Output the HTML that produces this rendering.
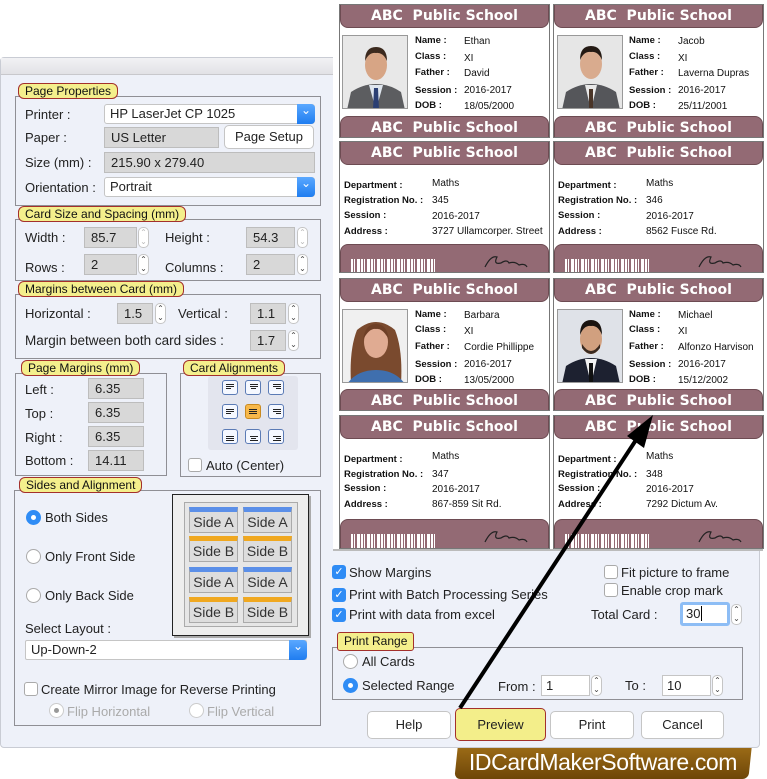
<!DOCTYPE html>
<html><head><meta charset="utf-8">
<style>
*{box-sizing:border-box;margin:0;padding:0}
body{width:767px;height:779px;position:relative;overflow:hidden;background:#fff;font-family:"Liberation Sans",Arial,sans-serif;font-size:13px;color:#222}
.a{position:absolute}
.dlg{left:0;top:57px;width:760px;height:691px;background:#eef1f9;border:1px solid #c9ccd4;border-radius:4px}
.strip{left:1px;top:58px;width:758px;height:17px;background:linear-gradient(#f2f2f4,#e2e2e6);border-bottom:1px solid #c8c8cc}
.box{border:1px solid #8f8f95}
.lbl{background:#f4ef8c;border:1px solid #a3302c;border-radius:6px;font-size:12px;line-height:14px;padding:0 6px;white-space:nowrap;color:#111}
.fld{background:#d8d8d8;border:1px solid #bdbdbd;font-size:13px;padding-left:6px;line-height:19px}
.sel{background:#fff;border:1px solid #c5c5c5;font-size:13px;padding-left:5px;line-height:18px;border-radius:3px}
.sel:after{content:"⌄";position:absolute;right:-1px;top:-1px;width:18px;height:20px;background:linear-gradient(#5aa8ff,#1f7df0);border-radius:0 4px 4px 0;color:#fff;text-align:center;font-size:12px;line-height:12px}
.spin{width:11px;height:21px;border:1px solid #c5c5c5;border-radius:5px;background:#fff;font-size:8px;line-height:9px;text-align:center;color:#444}
.btn{background:#fff;border:1px solid #c5c5c5;border-radius:5px;text-align:center;font-size:13px;line-height:26px}
.rad{width:15px;height:15px;border-radius:50%;border:1px solid #aaa;background:#fff}
.rad.on{background:#2f8cf5;border-color:#2f8cf5}
.rad.on:after{content:"";position:absolute;left:4px;top:4px;width:5px;height:5px;border-radius:50%;background:#fff}
.chk{width:14px;height:14px;border:1px solid #aaa;border-radius:3px;background:#fff}
.chk.on{background:#2f8cf5;border-color:#2f8cf5;color:#fff;font-size:11px;line-height:13px;text-align:center}
.card{width:211px;border:1px solid #777;background:#fff;overflow:hidden}
.hd{position:absolute;left:0;width:209px;height:24px;background:#936a74;border:1px solid #6d4b52;color:#fff;font:bold 14px "DejaVu Sans",sans-serif;text-align:center;line-height:23px;white-space:pre}
.top{top:-1px;border-radius:0 0 8px 8px}
.bot{border-radius:8px 8px 0 0}
.k{position:absolute;font:bold 9.5px "Liberation Sans",Arial,sans-serif;color:#111;white-space:nowrap}
.v{position:absolute;font-size:10px;color:#111;white-space:nowrap}
.ph{position:absolute;left:2px;top:30px;width:66px;height:74px;border:1px solid #999;background:#eaeaea;overflow:hidden}
.bc{position:absolute;left:10px;top:14px;width:86px;height:15px;background:repeating-linear-gradient(90deg,#fff 0 2px,transparent 2px 3px,#fff 3px 4px,transparent 4px 6px,#fff 6px 9px,transparent 9px 10px)}
.ai{position:absolute;width:16px;height:15px;border:1px solid #5b7bb5;border-radius:3px;background:#f5f8ff}
.ai i{position:absolute;left:3px;width:8px;height:1px;background:#222}
.sb{position:absolute;width:49px;height:26px;border:1px solid #aaa;background:#ddd;font-size:14px;text-align:center;line-height:20px;color:#333}
.sb.A{border-top:5px solid #5b8fe8}
.sb.B{border-top:5px solid #f0a820}
</style></head><body>

<div class="a dlg"></div>
<div class="a strip"></div>

<div class="a box" style="left:15px;top:96px;width:306px;height:110px"></div>
<div class="a lbl" style="left:18px;top:83px">Page Properties</div>
<div class="a" style="left:25px;top:107px">Printer :</div>
<div class="a sel" style="left:104px;top:104px;width:211px;height:20px">HP LaserJet CP 1025</div>
<div class="a" style="left:25px;top:130px">Paper :</div>
<div class="a fld" style="left:104px;top:127px;width:115px;height:21px">US Letter</div>
<div class="a btn" style="left:224px;top:125px;width:90px;height:24px;line-height:22px">Page Setup</div>
<div class="a" style="left:25px;top:155px">Size (mm) :</div>
<div class="a fld" style="left:104px;top:152px;width:211px;height:21px">215.90 x 279.40</div>
<div class="a" style="left:25px;top:180px">Orientation :</div>
<div class="a sel" style="left:104px;top:177px;width:211px;height:20px">Portrait</div>

<div class="a box" style="left:15px;top:219px;width:306px;height:62px"></div>
<div class="a lbl" style="left:18px;top:206px">Card Size and Spacing (mm)</div>
<div class="a" style="left:25px;top:230px">Width :</div>
<div class="a fld" style="left:84px;top:227px;width:53px;height:21px">85.7</div>
<div class="a spin" style="left:138px;top:227px;color:#bbb">⌃<br>⌄</div>
<div class="a" style="left:165px;top:230px">Height :</div>
<div class="a fld" style="left:246px;top:227px;width:49px;height:21px">54.3</div>
<div class="a spin" style="left:297px;top:227px;color:#bbb">⌃<br>⌄</div>
<div class="a" style="left:25px;top:260px">Rows :</div>
<div class="a fld" style="left:84px;top:254px;width:53px;height:21px">2</div>
<div class="a spin" style="left:138px;top:254px">⌃<br>⌄</div>
<div class="a" style="left:165px;top:260px">Columns :</div>
<div class="a fld" style="left:246px;top:254px;width:49px;height:21px">2</div>
<div class="a spin" style="left:297px;top:254px">⌃<br>⌄</div>

<div class="a box" style="left:15px;top:294px;width:306px;height:65px"></div>
<div class="a lbl" style="left:18px;top:281px">Margins between Card (mm)</div>
<div class="a" style="left:25px;top:306px">Horizontal :</div>
<div class="a fld" style="left:117px;top:303px;width:36px;height:21px">1.5</div>
<div class="a spin" style="left:155px;top:303px">⌃<br>⌄</div>
<div class="a" style="left:178px;top:306px">Vertical :</div>
<div class="a fld" style="left:250px;top:303px;width:36px;height:21px">1.1</div>
<div class="a spin" style="left:288px;top:303px">⌃<br>⌄</div>
<div class="a" style="left:25px;top:333px;font-size:13.5px">Margin between both card sides :</div>
<div class="a fld" style="left:250px;top:330px;width:36px;height:21px">1.7</div>
<div class="a spin" style="left:288px;top:330px">⌃<br>⌄</div>

<div class="a box" style="left:15px;top:373px;width:152px;height:103px"></div>
<div class="a lbl" style="left:21px;top:360px">Page Margins (mm)</div>
<div class="a" style="left:25px;top:382px">Left :</div>
<div class="a fld" style="left:88px;top:378px;width:56px;height:21px">6.35</div>
<div class="a" style="left:25px;top:406px">Top :</div>
<div class="a fld" style="left:88px;top:402px;width:56px;height:21px">6.35</div>
<div class="a" style="left:25px;top:430px">Right :</div>
<div class="a fld" style="left:88px;top:426px;width:56px;height:21px">6.35</div>
<div class="a" style="left:25px;top:453px">Bottom :</div>
<div class="a fld" style="left:88px;top:450px;width:56px;height:21px">14.11</div>

<div class="a box" style="left:180px;top:373px;width:141px;height:104px"></div>
<div class="a lbl" style="left:183px;top:360px">Card Alignments</div>
<div class="a" style="left:208px;top:376px;width:90px;height:74px;background:#e3e5ee;border-radius:3px"></div>
<div class="ai" style="left:222px;top:380px"><i style="top:3px"></i><i style="top:5px"></i><i style="top:7px;width:5px"></i></div>
<div class="ai" style="left:245px;top:380px"><i style="top:3px;left:4px"></i><i style="top:5px;left:4px"></i><i style="top:7px;left:5px;width:5px"></i></div>
<div class="ai" style="left:268px;top:380px"><i style="top:3px;left:4px"></i><i style="top:5px;left:4px"></i><i style="top:7px;left:7px;width:5px"></i></div>
<div class="ai" style="left:222px;top:404px"><i style="top:4px"></i><i style="top:6px"></i><i style="top:8px;width:5px"></i></div>
<div class="ai" style="left:245px;top:404px;background:#f7b84a;border-color:#c98a20"><i style="top:4px;left:3px"></i><i style="top:6px;left:3px"></i><i style="top:8px;left:3px"></i></div>
<div class="ai" style="left:268px;top:404px"><i style="top:4px;left:4px"></i><i style="top:6px;left:4px"></i><i style="top:8px;left:7px;width:5px"></i></div>
<div class="ai" style="left:222px;top:429px"><i style="top:6px"></i><i style="top:8px"></i><i style="top:10px"></i></div>
<div class="ai" style="left:245px;top:429px"><i style="top:6px;left:4px"></i><i style="top:8px;left:5px;width:5px"></i><i style="top:10px;left:4px"></i></div>
<div class="ai" style="left:268px;top:429px"><i style="top:6px;left:4px"></i><i style="top:8px;left:7px;width:5px"></i><i style="top:10px;left:4px"></i></div>
<div class="a chk" style="left:188px;top:458px"></div>
<div class="a" style="left:206px;top:458px">Auto (Center)</div>

<div class="a box" style="left:14px;top:490px;width:307px;height:236px"></div>
<div class="a lbl" style="left:19px;top:477px">Sides and Alignment</div>
<div class="a rad on" style="left:26px;top:510px"></div><div class="a" style="left:45px;top:510px">Both Sides</div>
<div class="a rad" style="left:26px;top:549px"></div><div class="a" style="left:45px;top:549px">Only Front Side</div>
<div class="a rad" style="left:26px;top:588px"></div><div class="a" style="left:45px;top:588px">Only Back Side</div>
<div class="a" style="left:172px;top:494px;width:137px;height:142px;border:1px solid #222;background:#eee;box-shadow:2px 2px 0 #aaa"></div>
<div class="a" style="left:184px;top:502px;width:114px;height:125px;border:1px solid #aaa;background:#e6e6e6"></div>
<div class="sb A" style="left:189px;top:507px">Side A</div><div class="sb A" style="left:243px;top:507px">Side A</div>
<div class="sb B" style="left:189px;top:536px">Side B</div><div class="sb B" style="left:243px;top:536px">Side B</div>
<div class="sb A" style="left:189px;top:567px">Side A</div><div class="sb A" style="left:243px;top:567px">Side A</div>
<div class="sb B" style="left:189px;top:597px">Side B</div><div class="sb B" style="left:243px;top:597px">Side B</div>
<div class="a" style="left:25px;top:621px">Select Layout :</div>
<div class="a sel" style="left:25px;top:640px;width:282px;height:20px;border-radius:2px">Up-Down-2</div>
<div class="a chk" style="left:24px;top:682px"></div>
<div class="a" style="left:41px;top:682px">Create Mirror Image for Reverse Printing</div>
<div class="a rad" style="left:49px;top:703px;border-color:#ccc"></div><div class="a" style="left:54px;top:708px;width:5px;height:5px;border-radius:50%;background:#999"></div>
<div class="a" style="left:67px;top:704px;color:#aaa">Flip Horizontal</div>
<div class="a rad" style="left:189px;top:703px;border-color:#ccc"></div>
<div class="a" style="left:207px;top:704px;color:#aaa">Flip Vertical</div>

<div class="a" style="left:333px;top:0;width:430px;height:551px;background:#fff;border-bottom:2px solid #bbb"></div>

<div class="a card" style="left:339px;top:4px;height:134px">
 <div class="hd top">ABC  Public School</div>
 <div class="ph"><svg width="66" height="74"><rect width="66" height="74" fill="#e8e8e8"/><path d="M4 74 L8 56 Q20 48 33 48 Q46 48 58 56 L62 74Z" fill="#5c5d60"/><path d="M26 49 L33 74 L40 49Z" fill="#dfe6ee"/><path d="M31 52 L35 52 L36 74 L30 74Z" fill="#2b3f73"/><ellipse cx="33" cy="29" rx="11" ry="15" fill="#d7a585"/><path d="M22 25 Q22 11 33 11 Q44 11 44 25 Q40 16 33 17 Q26 16 22 25Z" fill="#3c2a1e"/></svg></div>
 <div class="k" style="left:75px;top:30px">Name :</div><div class="v" style="left:124px;top:31px">Ethan</div>
 <div class="k" style="left:75px;top:46px">Class :</div><div class="v" style="left:124px;top:48px">XI</div>
 <div class="k" style="left:75px;top:62px">Father :</div><div class="v" style="left:124px;top:63px">David</div>
 <div class="k" style="left:75px;top:80px">Session :</div><div class="v" style="left:124px;top:80px">2016-2017</div>
 <div class="k" style="left:75px;top:95px">DOB :</div><div class="v" style="left:124px;top:96px">18/05/2000</div>
 <div class="hd bot" style="top:111px">ABC  Public School</div>
</div>
<div class="a card" style="left:553px;top:4px;height:134px">
 <div class="hd top">ABC  Public School</div>
 <div class="ph" style="top:30px;left:3px"><svg width="66" height="74"><rect width="66" height="74" fill="#e6e6e6"/><path d="M4 74 L8 56 Q20 48 33 48 Q46 48 58 56 L62 74Z" fill="#55565a"/><path d="M27 49 L33 74 L39 49Z" fill="#e8e8e8"/><path d="M31 53 L35 53 L35 74 L31 74Z" fill="#4a3528"/><ellipse cx="33" cy="28" rx="11" ry="15" fill="#d9ab8e"/><path d="M22 24 Q22 10 33 10 Q44 10 44 24 Q40 15 33 16 Q26 15 22 24Z" fill="#241a14"/></svg></div>
 <div class="k" style="left:75px;top:30px">Name :</div><div class="v" style="left:124px;top:31px">Jacob</div>
 <div class="k" style="left:75px;top:46px">Class :</div><div class="v" style="left:124px;top:48px">XI</div>
 <div class="k" style="left:75px;top:62px">Father :</div><div class="v" style="left:124px;top:63px">Laverna Dupras</div>
 <div class="k" style="left:75px;top:80px">Session :</div><div class="v" style="left:124px;top:80px">2016-2017</div>
 <div class="k" style="left:75px;top:95px">DOB :</div><div class="v" style="left:124px;top:96px">25/11/2001</div>
 <div class="hd bot" style="top:111px">ABC  Public School</div>
</div>

<div class="a card" style="left:339px;top:141px;height:132px">
 <div class="hd top">ABC  Public School</div>
 <div class="k" style="left:4px;top:38px">Department :</div><div class="v" style="left:92px;top:36px">Maths</div>
 <div class="k" style="left:4px;top:53px">Registration No. :</div><div class="v" style="left:92px;top:53px">345</div>
 <div class="k" style="left:4px;top:68px">Session :</div><div class="v" style="left:92px;top:69px">2016-2017</div>
 <div class="k" style="left:4px;top:84px">Address :</div><div class="v" style="left:92px;top:84px">3727 Ullamcorper. Street</div>
 <div class="hd bot" style="top:102px;height:30px"><div class="bc"></div><svg class="a" style="left:140px;top:6px" width="50" height="20"><path d="M4 16 Q10 4 16 6 Q12 14 20 12 Q26 8 28 12 Q34 10 38 14 Q44 12 46 16" stroke="#222" fill="none" stroke-width="1.2"/></svg></div>
</div>
<div class="a card" style="left:553px;top:141px;height:132px">
 <div class="hd top">ABC  Public School</div>
 <div class="k" style="left:4px;top:38px">Department :</div><div class="v" style="left:92px;top:36px">Maths</div>
 <div class="k" style="left:4px;top:53px">Registration No. :</div><div class="v" style="left:92px;top:53px">346</div>
 <div class="k" style="left:4px;top:68px">Session :</div><div class="v" style="left:92px;top:69px">2016-2017</div>
 <div class="k" style="left:4px;top:84px">Address :</div><div class="v" style="left:92px;top:84px">8562 Fusce Rd.</div>
 <div class="hd bot" style="top:102px;height:30px"><div class="bc"></div><svg class="a" style="left:140px;top:6px" width="50" height="20"><path d="M4 16 Q10 4 16 6 Q12 14 20 12 Q26 8 28 12 Q34 10 38 14 Q44 12 46 16" stroke="#222" fill="none" stroke-width="1.2"/></svg></div>
</div>

<div class="a card" style="left:339px;top:278px;height:133px">
 <div class="hd top">ABC  Public School</div>
 <div class="ph"><svg width="66" height="74"><rect width="66" height="74" fill="#f0f0f0"/><path d="M8 74 Q6 40 14 20 Q33 4 52 20 Q60 40 58 74Z" fill="#7a4a2e"/><path d="M4 74 Q14 60 33 60 Q52 60 62 74Z" fill="#3f6fae"/><ellipse cx="33" cy="32" rx="12" ry="16" fill="#e0ab92"/><path d="M20 30 Q22 14 33 14 Q44 14 46 30 Q40 18 33 19 Q26 18 20 30Z" fill="#6e3f26"/></svg></div>
 <div class="k" style="left:75px;top:30px">Name :</div><div class="v" style="left:124px;top:31px">Barbara</div>
 <div class="k" style="left:75px;top:45px">Class :</div><div class="v" style="left:124px;top:47px">XI</div>
 <div class="k" style="left:75px;top:62px">Father :</div><div class="v" style="left:124px;top:63px">Cordie Phillippe</div>
 <div class="k" style="left:75px;top:80px">Session :</div><div class="v" style="left:124px;top:80px">2016-2017</div>
 <div class="k" style="left:75px;top:95px">DOB :</div><div class="v" style="left:124px;top:96px">13/05/2000</div>
 <div class="hd bot" style="top:110px">ABC  Public School</div>
</div>
<div class="a card" style="left:553px;top:278px;height:133px">
 <div class="hd top">ABC  Public School</div>
 <div class="ph" style="left:3px;top:30px"><svg width="66" height="74"><rect width="66" height="74" fill="#dfe2e8"/><path d="M4 74 L8 56 Q20 48 33 48 Q46 48 58 56 L62 74Z" fill="#1d2130"/><path d="M27 49 L33 74 L39 49Z" fill="#f2f2f2"/><path d="M31 53 L35 53 L35 74 L31 74Z" fill="#111"/><ellipse cx="33" cy="29" rx="11" ry="15" fill="#d1a07f"/><path d="M22 25 Q22 10 33 10 Q44 10 44 25 Q40 15 33 16 Q26 15 22 25Z" fill="#1a1410"/><path d="M24 34 Q33 48 42 34 L42 38 Q33 50 24 38Z" fill="#3a2a20"/></svg></div>
 <div class="k" style="left:75px;top:30px">Name :</div><div class="v" style="left:124px;top:31px">Michael</div>
 <div class="k" style="left:75px;top:45px">Class :</div><div class="v" style="left:124px;top:47px">XI</div>
 <div class="k" style="left:75px;top:62px">Father :</div><div class="v" style="left:124px;top:63px">Alfonzo Harvison</div>
 <div class="k" style="left:75px;top:80px">Session :</div><div class="v" style="left:124px;top:80px">2016-2017</div>
 <div class="k" style="left:75px;top:95px">DOB :</div><div class="v" style="left:124px;top:96px">15/12/2002</div>
 <div class="hd bot" style="top:110px">ABC  Public School</div>
</div>

<div class="a card" style="left:339px;top:415px;height:134px">
 <div class="hd top">ABC  Public School</div>
 <div class="k" style="left:4px;top:38px">Department :</div><div class="v" style="left:92px;top:35px">Maths</div>
 <div class="k" style="left:4px;top:53px">Registration No. :</div><div class="v" style="left:92px;top:53px">347</div>
 <div class="k" style="left:4px;top:67px">Session :</div><div class="v" style="left:92px;top:68px">2016-2017</div>
 <div class="k" style="left:4px;top:83px">Address :</div><div class="v" style="left:92px;top:83px">867-859 Sit Rd.</div>
 <div class="hd bot" style="top:103px;height:31px"><div class="bc"></div><svg class="a" style="left:140px;top:6px" width="50" height="20"><path d="M4 16 Q10 4 16 6 Q12 14 20 12 Q26 8 28 12 Q34 10 38 14 Q44 12 46 16" stroke="#222" fill="none" stroke-width="1.2"/></svg></div>
</div>
<div class="a card" style="left:553px;top:415px;height:134px">
 <div class="hd top">ABC  Public School</div>
 <div class="k" style="left:4px;top:38px">Department :</div><div class="v" style="left:92px;top:35px">Maths</div>
 <div class="k" style="left:4px;top:53px">Registration No. :</div><div class="v" style="left:92px;top:53px">348</div>
 <div class="k" style="left:4px;top:67px">Session :</div><div class="v" style="left:92px;top:68px">2016-2017</div>
 <div class="k" style="left:4px;top:83px">Address :</div><div class="v" style="left:92px;top:83px">7292 Dictum Av.</div>
 <div class="hd bot" style="top:103px;height:31px"><div class="bc"></div><svg class="a" style="left:140px;top:6px" width="50" height="20"><path d="M4 16 Q10 4 16 6 Q12 14 20 12 Q26 8 28 12 Q34 10 38 14 Q44 12 46 16" stroke="#222" fill="none" stroke-width="1.2"/></svg></div>
</div>

<div class="a chk on" style="left:332px;top:565px">✓</div><div class="a" style="left:349px;top:565px">Show Margins</div>
<div class="a chk on" style="left:332px;top:588px">✓</div><div class="a" style="left:349px;top:587px">Print with Batch Processing Series</div>
<div class="a chk on" style="left:332px;top:608px">✓</div><div class="a" style="left:349px;top:607px">Print with data from excel</div>
<div class="a chk" style="left:604px;top:565px"></div><div class="a" style="left:621px;top:565px">Fit picture to frame</div>
<div class="a chk" style="left:604px;top:583px"></div><div class="a" style="left:621px;top:583px">Enable crop mark</div>
<div class="a" style="left:591px;top:607px">Total Card :</div>
<div class="a" style="left:680px;top:602px;width:50px;height:24px;border:3px solid #8dbdf5;border-radius:3px;background:#fff;padding-left:3px;line-height:18px">30<span style="border-left:1px solid #000;margin-left:1px"></span></div>
<div class="a spin" style="left:731px;top:604px">⌃<br>⌄</div>

<div class="a box" style="left:332px;top:647px;width:411px;height:53px"></div>
<div class="a lbl" style="left:337px;top:632px;border-radius:3px;line-height:17px">Print Range</div>
<div class="a rad" style="left:343px;top:654px"></div><div class="a" style="left:362px;top:654px">All Cards</div>
<div class="a rad on" style="left:343px;top:678px"></div><div class="a" style="left:362px;top:678px">Selected Range</div>
<div class="a" style="left:498px;top:679px">From :</div>
<div class="a" style="left:541px;top:675px;width:49px;height:21px;background:#fff;border:1px solid #c5c5c5;padding-left:4px;line-height:19px">1</div>
<div class="a spin" style="left:591px;top:675px">⌃<br>⌄</div>
<div class="a" style="left:625px;top:678px">To :</div>
<div class="a" style="left:662px;top:675px;width:49px;height:21px;background:#fff;border:1px solid #c5c5c5;padding-left:4px;line-height:19px">10</div>
<div class="a spin" style="left:712px;top:675px">⌃<br>⌄</div>

<div class="a btn" style="left:367px;top:711px;width:84px;height:28px">Help</div>
<div class="a btn" style="left:455px;top:708px;width:91px;height:33px;background:#f3ee8a;border:1px solid #a3302c;line-height:31px">Preview</div>
<div class="a btn" style="left:550px;top:711px;width:84px;height:28px">Print</div>
<div class="a btn" style="left:641px;top:711px;width:83px;height:28px">Cancel</div>

<svg class="a" style="left:0;top:0" width="767" height="779"><line x1="460" y1="708" x2="636" y2="440" stroke="#000" stroke-width="4"/><path d="M653 415 L627 436 L644 448Z" fill="#000"/></svg>

<div class="a" style="left:456px;top:748px;width:294px;height:31px;background:linear-gradient(#9a6a16,#6e4608);border-radius:0 0 6px 6px;transform:skewX(-6deg)"></div>
<div class="a" style="left:462px;top:747px;width:282px;font-size:23px;color:#fff;text-align:center;line-height:31px;letter-spacing:-0.4px;white-space:nowrap">IDCardMakerSoftware.com</div>
</body></html>
